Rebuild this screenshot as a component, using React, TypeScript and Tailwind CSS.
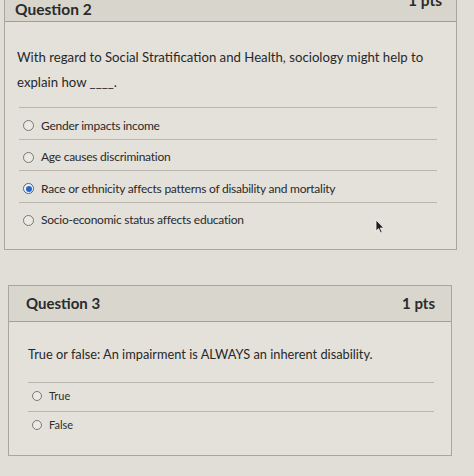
import React from "react";

function Radio({ checked, size = 11 }: { checked?: boolean; size?: number }) {
  const cls = size === 11 ? "w-[11px] h-[11px]" : "w-[10px] h-[10px]";
  if (checked) {
    return (
      <span className={`${cls} rounded-full border border-[#2f66c4] bg-[#f4f3ef] flex items-center justify-center shrink-0`}>
        <span className="w-[6px] h-[6px] rounded-full bg-[#2d63c8]" />
      </span>
    );
  }
  return <span className={`${cls} rounded-full border border-[#7a7872] bg-[#ebe9e3] shrink-0`} />;
}

function Option({ label, checked }: { label: string; checked?: boolean }) {
  return (
    <div className="h-[31.5px] border-t border-[#b9b6ae] flex items-center gap-[7px] pl-[4px] pt-[5px]">
      <Radio checked={checked} />
      <span className="text-[12px] tracking-[-0.25px] text-[#2a2a2a] leading-[18px]">{label}</span>
    </div>
  );
}

export default function App() {
  return (
    <div className="w-[474px] h-[476px] bg-[#e1ded7] overflow-hidden relative font-['Lato','Open_Sans',sans-serif]">
      {/* Question 2 */}
      <div className="ml-[4px] w-[453px] h-[250px] border-x border-b border-[#a9a69e] flex flex-col bg-[#e4e1da]">
        <div className="h-[22px] bg-[#d8d5cd] border-b border-[#a19e96] flex justify-between px-[10px] shrink-0">
          <span className="text-[15.5px] font-bold text-[#2b2b2b] leading-[20px] mt-[-1px]">Question 2</span>
          <span className="text-[15.5px] font-bold text-[#2b2b2b] leading-[20px] mt-[-10px] mr-[4px]">1 pts</span>
        </div>
        <div className="flex-1 pl-[12px] pr-[19px] pt-[23px]">
          <p className="text-[13.2px] leading-[25px] text-[#282828]">
            With regard to Social Stratification and Health, sociology might help to explain how ____.
          </p>
          <div className="mt-[12px] pl-[2px]">
            <Option label="Gender impacts income" />
            <Option label="Age causes discrimination" />
            <Option label="Race or ethnicity affects patterns of disability and mortality" checked />
            <Option label="Socio-economic status affects education" />
          </div>
        </div>
      </div>

      {/* Question 3 */}
      <div className="mt-[35px] ml-[8px] w-[444px] h-[171px] border border-[#a9a69e] flex flex-col bg-[#e4e1da]">
        <div className="h-[36px] bg-[#d9d6ce] border-b border-[#a19e96] flex items-center justify-between pl-[17px] pr-[16px] shrink-0">
          <span className="text-[15px] font-bold text-[#2b2b2b]">Question 3</span>
          <span className="text-[15px] font-bold text-[#2b2b2b]">1 pts</span>
        </div>
        <div className="flex-1 pl-[19px] pr-[17px] pt-[22px]">
          <p className="text-[12.8px] leading-[20px] text-[#282828]">
            True or false: An impairment is ALWAYS an inherent disability.
          </p>
          <div className="mt-[18px]">
            <div className="h-[29px] border-t border-[#b9b6ae] flex items-center gap-[7px] pl-[4px] pb-[2px]">
              <Radio size={10} />
              <span className="text-[11px] text-[#2e2e2e]">True</span>
            </div>
            <div className="h-[29px] border-t border-[#b9b6ae] flex items-center gap-[7px] pl-[4px] pb-[2px]">
              <Radio size={10} />
              <span className="text-[11px] text-[#2e2e2e]">False</span>
            </div>
          </div>
        </div>
      </div>

      {/* cursor */}
      <svg className="absolute left-[375px] top-[219px]" width="10" height="15" viewBox="0 0 10 15">
        <path d="M1 1 L1 12 L3.6 9.6 L5.6 14 L7.2 13.3 L5.3 9 L8.8 9 Z" fill="#1f1f1f" stroke="#f4f4f4" strokeWidth="0.8" />
      </svg>
    </div>
  );
}
